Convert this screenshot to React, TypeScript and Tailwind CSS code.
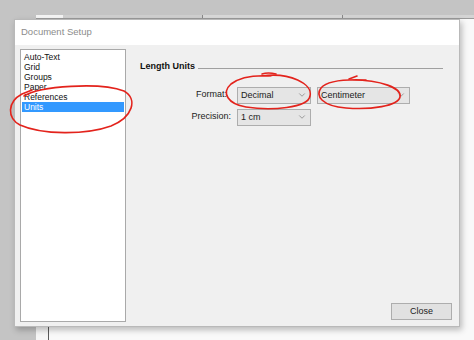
import { ChevronDown } from 'lucide-react';

const items = ['Auto-Text', 'Grid', 'Groups', 'Paper', 'References', 'Units'];

function Select({ value, width }: { value: string; width: string }) {
  return (
    <div className={`${width} h-[17px] flex items-center justify-between bg-[#e5e5e5] border border-[#adadad] pl-[3px] pr-[3px]`}>
      <span className="text-[9px] text-[#1a1a1a] leading-none">{value}</span>
      <ChevronDown size={10} strokeWidth={1.5} className="text-[#6d6d6d]" />
    </div>
  );
}

export default function App() {
  return (
    <div className="relative w-[474px] h-[340px] overflow-hidden bg-[#c4c4c4] font-['Liberation_Sans',Arial,sans-serif]">
      {/* document page behind the dialog */}
      <div className="ml-[36px] mt-[15px] h-[325px] bg-white flex flex-col">
        <div className="h-[4px] flex border-b border-[#9a9a9a]">
          <div className="w-[27px] bg-[#f4f4f4]" />
          <div className="w-[140px] bg-[#cfcfcf] border-r border-[#888]" />
          <div className="w-[140px] bg-[#d8d8d8] border-r border-[#888]" />
          <div className="flex-1 bg-[#d4d4d4]" />
        </div>
        <div className="flex-1 flex">
          <div className="w-[13px] border-r border-[#5a5a5a] bg-[#f6f6f6]" />
          <div className="flex-1 bg-[#f9f9f9]" />
        </div>
      </div>

      {/* dialog window */}
      <div className="absolute left-[14px] top-[19px] w-[446px] h-[308px] flex flex-col bg-[#f0f0f0] border border-[#b9b9b9] shadow-[2px_3px_6px_rgba(0,0,0,0.25)]">
        <div className="h-[25px] bg-white flex items-center pl-[6px]">
          <span className="text-[9.5px] text-[#8c8c8c]">Document Setup</span>
        </div>
        <div className="flex-1 flex pl-[5px] pt-[4px]">
          <div className="w-[106px] h-[273px] bg-white border border-[#a9a9a9] pt-[2px] px-[1px] flex flex-col">
            {items.map((it) => (
              <div
                key={it}
                className={`h-[10px] flex items-center pl-[2px] text-[8.5px] leading-none ${it === 'Units' ? 'bg-[#3399ff] text-white' : 'text-[#111]'}`}
              >
                {it}
              </div>
            ))}
          </div>

          <div className="flex-1 flex flex-col pl-[14px] pr-[16px]">
            <div className="mt-[11px] flex items-center gap-[3px]">
              <span className="text-[9px] font-bold text-[#111]">Length Units</span>
              <div className="flex-1 h-px bg-[#a0a0a0] mt-[3px]" />
            </div>

            <div className="mt-[13px] flex items-center">
              <span className="w-[87px] text-right text-[9px] text-[#222]">Format:</span>
              <div className="ml-[10px] flex gap-[6px]">
                <Select value="Decimal" width="w-[74px]" />
                <Select value="Centimeter" width="w-[93px]" />
              </div>
            </div>

            <div className="mt-[5px] flex items-center">
              <span className="w-[91px] text-right text-[9px] text-[#222]">Precision:</span>
              <div className="ml-[6px]">
                <Select value="1 cm" width="w-[74px]" />
              </div>
            </div>

            <div className="flex-1" />
            <div className="flex justify-end mb-[6px] -mr-[9px]">
              <button className="w-[61px] h-[17px] bg-[#e1e1e1] border border-[#adadad] text-[9px] text-[#222] leading-none">
                Close
              </button>
            </div>
          </div>
        </div>
      </div>

      {/* red hand-drawn annotations */}
      <svg className="absolute left-0 top-0 pointer-events-none" width="474" height="340" viewBox="0 0 474 340" fill="none">
        <g stroke="#e3231c" strokeWidth="1.6" strokeLinecap="round" strokeLinejoin="round">
          <path d="M24 96 C40 86, 100 82, 124 91 C138 99, 133 117, 111 126 C86 135, 42 135, 20 125 C7 118, 7 102, 22 94 L32 90" />
          <path d="M262 76 C290 72, 313 84, 310 96 C308 108, 271 111, 246 107 C228 104, 221 93, 231 84 C240 77, 255 75, 271 76" />
          <path d="M262 74 Q268 72 276 74" />
          <path d="M352 80 C381 80, 402 88, 400 97 C398 106, 371 110, 346 108 C322 106, 315 96, 321 88 C327 81, 344 79, 366 80" />
          <path d="M349 79 L357 76" />
        </g>
      </svg>
    </div>
  );
}
